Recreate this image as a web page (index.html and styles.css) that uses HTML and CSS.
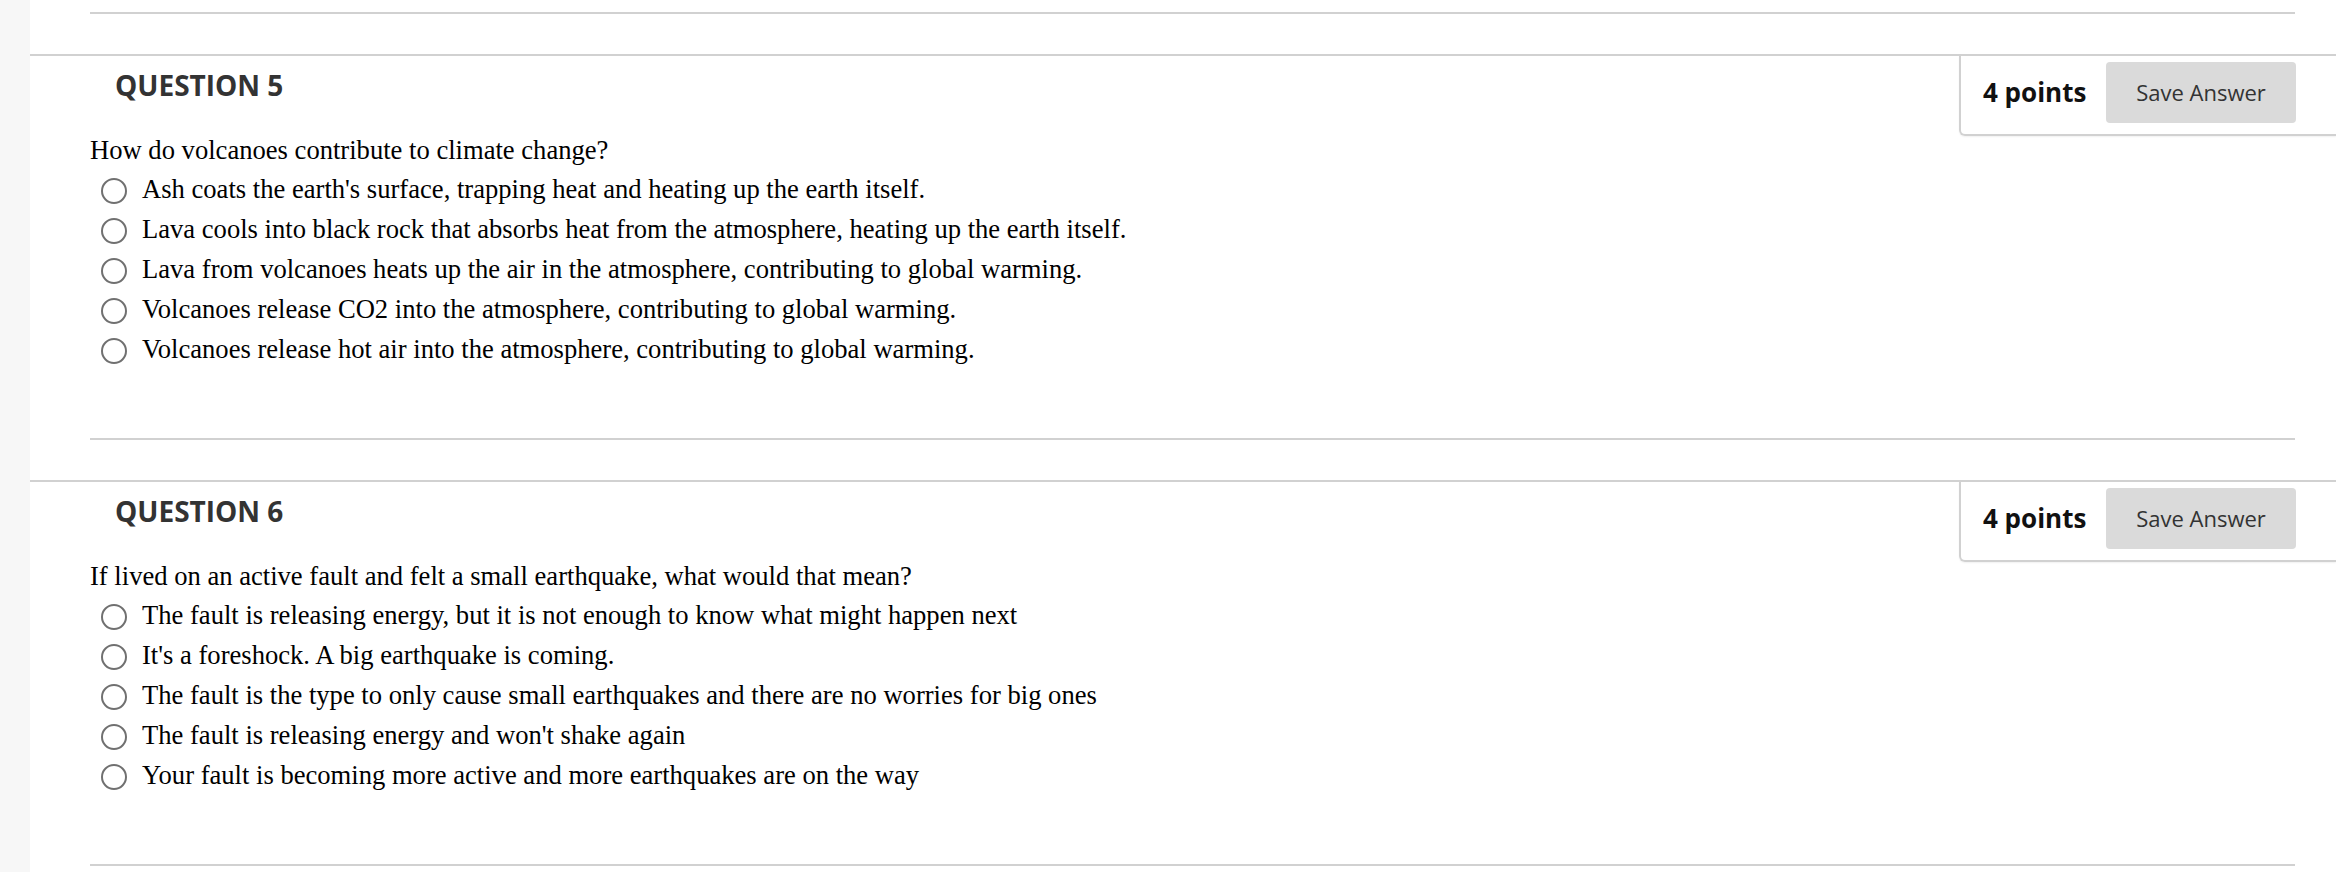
FILE: index.html
```html
<!DOCTYPE html>
<html lang="en">
<head>
<meta charset="utf-8">
<title>Quiz</title>
<link rel="stylesheet" href="styles.css">
</head>
<body>
<div class="page">
  <div class="prev"></div>

  <section class="question">
    <div class="q-head">
      <h2 class="q-title">QUESTION 5</h2>
      <div class="points">
        <span class="points-label">4 points</span>
        <button class="save-btn" type="button">Save Answer</button>
      </div>
    </div>
    <div class="q-body">
      <p class="q-text">How do volcanoes contribute to climate change?</p>
      <ul class="options">
        <li class="option"><input class="radio" type="radio" name="q5" id="q5a"><label for="q5a">Ash coats the earth's surface, trapping heat and heating up the earth itself.</label></li>
        <li class="option"><input class="radio" type="radio" name="q5" id="q5b"><label for="q5b">Lava cools into black rock that absorbs heat from the atmosphere, heating up the earth itself.</label></li>
        <li class="option"><input class="radio" type="radio" name="q5" id="q5c"><label for="q5c">Lava from volcanoes heats up the air in the atmosphere, contributing to global warming.</label></li>
        <li class="option"><input class="radio" type="radio" name="q5" id="q5d"><label for="q5d">Volcanoes release CO2 into the atmosphere, contributing to global warming.</label></li>
        <li class="option"><input class="radio" type="radio" name="q5" id="q5e"><label for="q5e">Volcanoes release hot air into the atmosphere, contributing to global warming.</label></li>
      </ul>
    </div>
  </section>

  <section class="question">
    <div class="q-head">
      <h2 class="q-title">QUESTION 6</h2>
      <div class="points">
        <span class="points-label">4 points</span>
        <button class="save-btn" type="button">Save Answer</button>
      </div>
    </div>
    <div class="q-body">
      <p class="q-text">If lived on an active fault and felt a small earthquake, what would that mean?</p>
      <ul class="options">
        <li class="option"><input class="radio" type="radio" name="q6" id="q6a"><label for="q6a">The fault is releasing energy, but it is not enough to know what might happen next</label></li>
        <li class="option"><input class="radio" type="radio" name="q6" id="q6b"><label for="q6b">It's a foreshock. A big earthquake is coming.</label></li>
        <li class="option"><input class="radio" type="radio" name="q6" id="q6c"><label for="q6c">The fault is the type to only cause small earthquakes and there are no worries for big ones</label></li>
        <li class="option"><input class="radio" type="radio" name="q6" id="q6d"><label for="q6d">The fault is releasing energy and won't shake again</label></li>
        <li class="option"><input class="radio" type="radio" name="q6" id="q6e"><label for="q6e">Your fault is becoming more active and more earthquakes are on the way</label></li>
      </ul>
    </div>
  </section>
</div>
</body>
</html>
```

FILE: styles.css
```css
html, body {
  margin: 0;
  padding: 0;
}

body {
  background: #f7f7f7;
  font-family: "Liberation Serif", "Times New Roman", serif;
  color: #000;
}

.page {
  margin-left: 30px;
  background: #fff;
  min-height: 100vh;
  overflow: hidden;
}

.prev {
  height: 12px;
  margin: 0 41px 40px 60px;
  border-bottom: 2px solid #d1d1d1;
}

.question {
  border-top: 2px solid #d1d1d1;
  padding: 0 41px 0 60px;
  margin-bottom: 40px;
}

.q-head {
  display: flex;
  justify-content: space-between;
  align-items: flex-start;
  margin-right: -41px;
}

.q-title {
  margin: 10px 0 0 25px;
  font-family: "Open Sans", "Liberation Sans", sans-serif;
  font-weight: 700;
  font-size: 28px;
  line-height: 38px;
  color: #333;
}

.points {
  width: 313px;
  display: flex;
  align-items: center;
  justify-content: space-between;
  padding: 6px 40px 11px 22px;
  border-left: 2px solid #d1d1d1;
  border-bottom: 2px solid #d1d1d1;
  border-bottom-left-radius: 6px;
  box-shadow: 0 1px 2px rgba(0, 0, 0, 0.06);
}

.points-label {
  font-family: "Open Sans", "Liberation Sans", sans-serif;
  font-weight: 700;
  font-size: 26px;
  line-height: 36px;
  margin-top: -2px;
  color: #111;
}

.save-btn {
  width: 190px;
  height: 61px;
  border: none;
  border-radius: 4px;
  background: #dadada;
  font-family: "Open Sans", "Liberation Sans", sans-serif;
  font-size: 22px;
  line-height: 30px;
  color: #333;
  padding: 0 0 2px 0;
}

.q-body {
  padding-bottom: 69px;
  border-bottom: 2px solid #d1d1d1;
}

.q-text {
  margin: 0 0 5px 0;
  font-size: 26.6px;
  line-height: 28px;
}

.options {
  list-style: none;
  margin: 0;
  padding: 0;
}

.option {
  display: flex;
  align-items: flex-start;
  height: 40px;
  font-size: 26.6px;
  line-height: 40px;
}

.radio {
  appearance: none;
  -webkit-appearance: none;
  box-sizing: border-box;
  width: 26px;
  height: 26px;
  margin: 9px 15px 0 11px;
  border: 2px solid #707070;
  border-radius: 50%;
  background: #fff;
  flex: none;
}
```
